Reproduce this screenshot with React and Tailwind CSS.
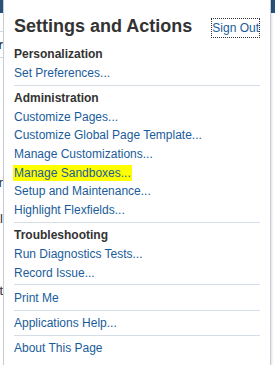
import React from 'react'

const sections = [
  { title: 'Personalization', items: ['Set Preferences...'] },
  {
    title: 'Administration',
    items: [
      'Customize Pages...',
      'Customize Global Page Template...',
      'Manage Customizations...',
      'Manage Sandboxes...',
      'Setup and Maintenance...',
      'Highlight Flexfields...',
    ],
  },
  { title: 'Troubleshooting', items: ['Run Diagnostics Tests...', 'Record Issue...'] },
  { items: ['Print Me'] },
  { items: ['Applications Help...'] },
  { items: ['About This Page'] },
]

function Row({ children }) {
  return <div className="h-[18.67px] flex items-center whitespace-nowrap">{children}</div>
}

export default function App() {
  return (
    <div className="relative w-[275px] h-[365px] overflow-hidden bg-white font-['Liberation_Sans',Arial,sans-serif]">
      {/* page behind the popup */}
      <div className="h-[13px] bg-[#28527a]" />
      <div className="w-[3px] overflow-hidden text-[#333]">
        <div className="h-[19px] border-b border-[#d3d9df]" />
        <div className="h-[26px] flex justify-end items-center border-b border-[#d3d9df] text-[13px] font-bold whitespace-nowrap">
          Number
        </div>
        <div className="h-[118px]" />
        <div className="h-[14px] flex justify-end items-center text-[13px] whitespace-nowrap">Number</div>
        <div className="h-[22px]" />
        <div className="h-[14px] flex justify-end items-center text-[13px] whitespace-nowrap">Total</div>
        <div className="h-[58px]" />
        <div className="h-[14px] flex justify-end items-center text-[13px] whitespace-nowrap">Export</div>
      </div>

      {/* settings popup */}
      <div className="absolute top-0 left-[3px] w-[268px] h-[365px] bg-white border-x border-[#c5cdd5] shadow-[1px_0_2px_rgba(0,0,0,0.12)] px-[10px] pt-[15px]">
        <div className="flex items-baseline justify-between mb-[5px]">
          <h1 className="text-[18px] leading-[22px] font-bold text-[#333]">Settings and Actions</h1>
          <a className="text-[12px] text-[#1a5c9a] outline-1 outline-dotted outline-[#333] mr-px">Sign Out</a>
        </div>

        {sections.map((s, i) => (
          <div key={i} className={`pt-[3px] pb-[2.5px] ${i > 0 ? 'border-t border-[#d6dde5]' : ''}`}>
            {s.title && (
              <Row>
                <span className="text-[12px] font-bold text-[#333]">{s.title}</span>
              </Row>
            )}
            {s.items.map((item) => (
              <Row key={item}>
                {item === 'Manage Sandboxes...' ? (
                  <span className="text-[12px] text-[#1a5c9a] bg-[#ffff00] h-[16px] leading-[16px] px-px -ml-px">{item}</span>
                ) : (
                  <span className="text-[12px] text-[#1a5c9a]">{item}</span>
                )}
              </Row>
            ))}
          </div>
        ))}
      </div>
    </div>
  )
}
